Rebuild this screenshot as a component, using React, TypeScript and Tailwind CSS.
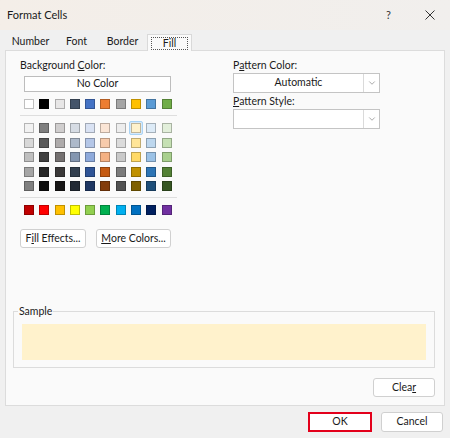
import { ChevronDown } from 'lucide-react';

const font = { fontFamily: 'Lato, "Noto Sans", sans-serif' };

const topRow = ['#ffffff', '#000000', '#e7e6e6', '#44546a', '#4472c4', '#ed7d31', '#a5a5a5', '#ffc000', '#5b9bd5', '#70ad47'];

const themeRows = [
  ['#f2f2f2', '#7f7f7f', '#d0cece', '#d6dce4', '#d9e2f3', '#fbe5d5', '#ededed', '#fff2cc', '#ddebf7', '#e2efda'],
  ['#d8d8d8', '#595959', '#aeabab', '#adb9ca', '#b4c6e7', '#f7cbac', '#dbdbdb', '#ffe598', '#bdd7ee', '#c5e0b3'],
  ['#bfbfbf', '#3f3f3f', '#757171', '#8496b0', '#8eaadb', '#f4b183', '#c9c9c9', '#ffd966', '#9bc2e6', '#a9d08e'],
  ['#a5a5a5', '#262626', '#3a3838', '#323f4f', '#2f5496', '#c55a11', '#7b7b7b', '#bf9000', '#2e75b5', '#538135'],
  ['#7f7f7f', '#0d0d0d', '#171616', '#222a35', '#1f3864', '#833c0b', '#525252', '#7f6000', '#1e4e79', '#375623'],
];

const standardRow = ['#c00000', '#ff0000', '#ffc000', '#ffff00', '#92d050', '#00b050', '#00b0f0', '#0070c0', '#002060', '#7030a0'];

function Swatch({ color, selected = false }: { color: string; selected?: boolean }) {
  return (
    <div className="relative h-[10px] w-[10px]">
      {selected && (
        <div className="absolute -left-[2px] -top-[2px] h-[14px] w-[14px] rounded-[2px] border border-[#a9d3f5] bg-[#d6eafb]" />
      )}
      <div className="relative h-[10px] w-[10px] border border-black/25" style={{ backgroundColor: color }} />
    </div>
  );
}

function SwatchRow({ colors, selectedIndex = -1 }: { colors: string[]; selectedIndex?: number }) {
  return (
    <div className="flex gap-x-[5.3px]">
      {colors.map((c, i) => (
        <Swatch key={c + i} color={c} selected={i === selectedIndex} />
      ))}
    </div>
  );
}

function Combo({ value }: { value?: string }) {
  return (
    <div className="flex h-[20px] w-[147px] border border-[#c4c4c4] bg-white">
      <div className="flex flex-1 items-center justify-center text-[10.5px] text-[#1a1a1a]">{value}</div>
      <div className="flex w-[16px] items-center justify-center border-l border-[#dadada]">
        <ChevronDown className="h-[10px] w-[10px] text-[#777]" strokeWidth={1.5} />
      </div>
    </div>
  );
}

function DlgButton({ children, className = '' }: { children: React.ReactNode; className?: string }) {
  return (
    <div className={`flex h-[19px] items-center justify-center rounded-[3px] border border-[#d0d0d0] bg-white text-[10.5px] text-[#1a1a1a] ${className}`}>
      {children}
    </div>
  );
}

export default function App() {
  return (
    <div style={font} className="flex h-[438px] w-[450px] flex-col overflow-hidden bg-[#f0f0f0] text-[#1a1a1a]">
      {/* Title bar */}
      <div className="flex h-[30px] items-center bg-gradient-to-r from-[#f4eee8] to-[#f1efed] pl-[7px]">
        <span className="text-[11px]">Format Cells</span>
        <div className="flex-1" />
        <span className="mr-[34px] text-[11px] text-[#333]">?</span>
        <svg className="mr-[15px]" width="10" height="10" viewBox="0 0 10 10">
          <path d="M0.5 0.5 L9.5 9.5 M9.5 0.5 L0.5 9.5" stroke="#333" strokeWidth="1" />
        </svg>
      </div>

      {/* Tabs */}
      <div className="flex h-[20px] items-end pl-[6px] text-[10.5px]">
        <div className="flex h-[16px] w-[49px] items-center justify-center">Number</div>
        <div className="flex h-[16px] w-[43px] items-center justify-center">Font</div>
        <div className="flex h-[16px] w-[49px] items-center justify-center">Border</div>
        <div className="relative z-10 -mb-px flex h-[17px] w-[45px] items-center justify-center border border-b-0 border-[#d9d9d9] bg-[#fafafa]">
          <span className="border border-dotted border-[#555] px-[11px] leading-[11px]">Fill</span>
        </div>
      </div>

      {/* Panel */}
      <div className="mx-[5px] flex h-[356px] flex-col border border-[#dcdcdc] bg-[#fafafa] pl-[7px] pr-[9px] pt-[7px]">
        <div className="flex">
          {/* Left column */}
          <div className="flex w-[220px] flex-col pl-[7px]">
            <div className="text-[10.5px] leading-[14px]">
              Background <span className="underline">C</span>olor:
            </div>
            <div className="ml-[4px] mt-[4px] flex h-[16px] w-[147px] items-center justify-center border border-[#bdbdbd] bg-white text-[10.5px]">
              No Color
            </div>
            <div className="ml-[4px] mt-[7px]">
              <SwatchRow colors={topRow} />
            </div>
            <div className="mt-[6px] h-px w-[157px] bg-[#dedede]" />
            <div className="ml-[4px] mt-[7px] flex flex-col gap-y-[4.5px]">
              {themeRows.map((row, i) => (
                <SwatchRow key={i} colors={row} selectedIndex={i === 0 ? 7 : -1} />
              ))}
            </div>
            <div className="mt-[6px] h-px w-[157px] bg-[#dedede]" />
            <div className="ml-[4px] mt-[7px]">
              <SwatchRow colors={standardRow} />
            </div>
            <div className="mt-[14px] flex gap-[10px]">
              <DlgButton className="w-[66px]">
                F<span className="underline">i</span>ll Effects...
              </DlgButton>
              <DlgButton className="w-[75px]">
                <span className="underline">M</span>ore Colors...
              </DlgButton>
            </div>
          </div>

          {/* Right column */}
          <div className="flex flex-col">
            <div className="text-[10.5px] leading-[14px]">
              P<span className="underline">a</span>ttern Color:
            </div>
            <div className="mt-[1px]">
              <Combo value="Automatic" />
            </div>
            <div className="mt-[1px] text-[10.5px] leading-[14px]">
              <span className="underline">P</span>attern Style:
            </div>
            <div className="mt-[1px]">
              <Combo />
            </div>
          </div>
        </div>

        <div className="flex-1" />

        {/* Sample group */}
        <div className="relative h-[57px] border border-[#dcdcdc] px-[8px] pb-[7px] pt-[12px]">
          <span className="absolute -top-[8px] left-[4px] bg-[#fafafa] px-[1px] text-[10.5px]">Sample</span>
          <div className="h-full bg-[#fff2cc]" />
        </div>

        <div className="mb-[8px] mt-[10px] flex justify-end">
          <DlgButton className="w-[62px]">
            Clea<span className="underline">r</span>
          </DlgButton>
        </div>
      </div>

      {/* Footer */}
      <div className="flex flex-1 items-center justify-end gap-[9px] pr-[7px]">
        <div className="flex h-[20px] w-[64px] items-center justify-center border-2 border-[#e3001b] bg-white text-[10.5px]">OK</div>
        <DlgButton className="h-[20px] w-[62px]">Cancel</DlgButton>
      </div>
    </div>
  );
}
